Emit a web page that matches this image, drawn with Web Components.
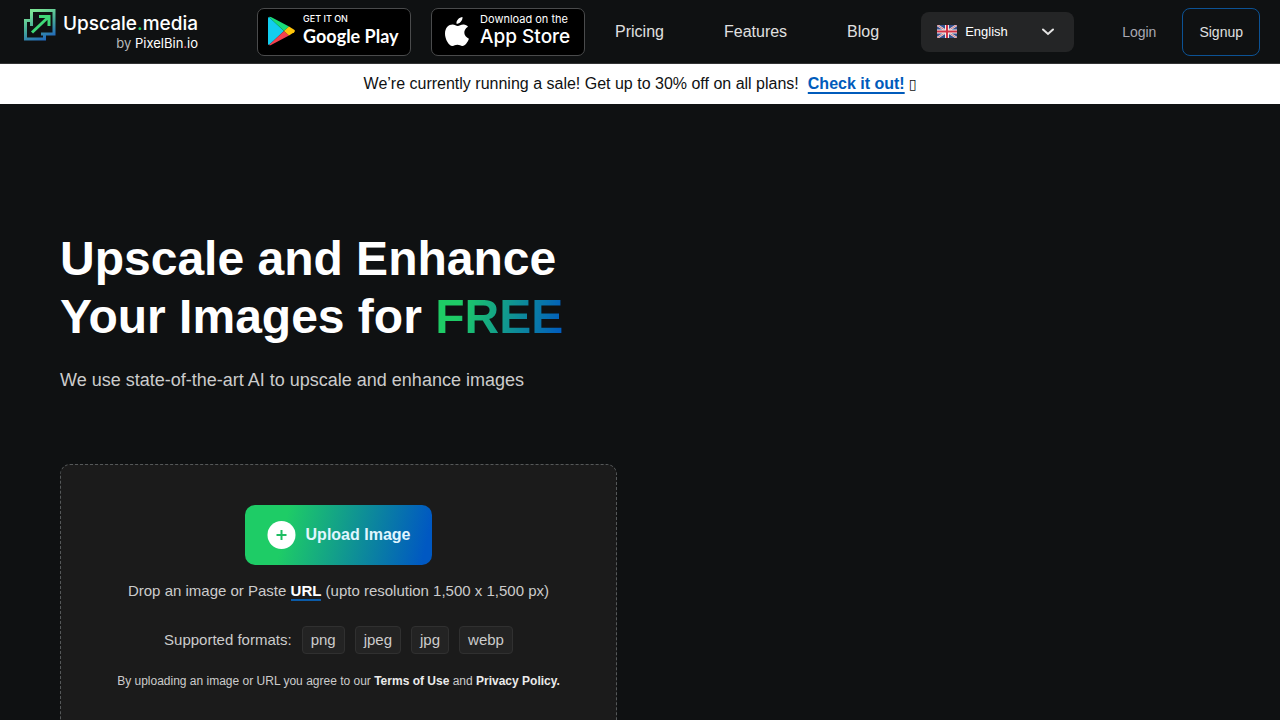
<!DOCTYPE html>
<html lang="en">
<head>
<meta charset="utf-8">
<meta name="viewport" content="width=device-width, initial-scale=1">
<title>Upscale.media</title>
<style>
  body { margin: 0; background: #0f1112; color: #fff; font-family: "Liberation Sans", Arial, sans-serif; }
</style>
</head>
<body>
<upscale-page></upscale-page>
<script>
const define = (name, html) => {
  const template = document.createElement('template');
  template.innerHTML = html;
  customElements.define(name, class extends HTMLElement {
    constructor() {
      super();
      this.attachShadow({ mode: 'open' }).append(template.content.cloneNode(true));
    }
  });
};

define('brand-logo', `
  <style>
    :host { display: block; }
    a { display: flex; gap: 7px; color: #fff; text-decoration: none; font-family: Inter, sans-serif; }
    svg { display: block; margin-top: 1px; }
    .words { display: flex; flex-direction: column; align-items: flex-end; }
    .name { font-size: 19px; line-height: 32px; font-weight: 500; }
    .by { font-size: 13px; line-height: 6px; font-weight: 400; }
    .by span { color: #b9bbbd; }
    .name i { font-style: normal; color: #1ecc66; }
    .by i { font-style: normal; color: #e05a78; }
  </style>
  <a href="#home">
    <svg width="32" height="32" viewBox="0 0 32 32" fill="none" stroke="url(#g)" stroke-width="3">
      <defs><linearGradient id="g" x1="10" y1="2" x2="22" y2="32" gradientUnits="userSpaceOnUse">
        <stop offset="0" stop-color="#7be495"/><stop offset=".45" stop-color="#48ad98"/><stop offset="1" stop-color="#1e62c0"/>
      </linearGradient></defs>
      <path d="M7.500 17V1.500H30V25H17M7.500 11.500H1.500V30H20.500V25"/>
      <path stroke="#3fd878" d="M8 23.500 25 7.500M15 7.500H25V17"/>
    </svg>
    <span class="words"><span class="name">Upscale<i>.</i>media</span><span class="by"><span>by</span> PixelBin<i>.</i>io</span></span>
  </a>`);

define('store-badge', `
  <style>
    :host { display: block; }
    a { box-sizing: border-box; width: 154px; height: 48px; display: flex; align-items: center; gap: 8px; padding: 0 10px 2px;
        border: 1px solid #4a4b4c; border-radius: 7px; background: #000; color: #fff; text-decoration: none; white-space: nowrap; }
    .text { display: flex; flex-direction: column; }
  </style>
  <a href="#store"><slot name="icon"></slot><span class="text"><slot></slot></span></a>`);

define('language-picker', `
  <style>
    :host { display: block; }
    label { display: grid; grid-template-columns: 16px 20px 1fr 12px 20px; align-items: center; width: 153px; height: 40px; border-radius: 8px; background: #242526; }
    svg { display: block; grid-row: 1; }
    .flag { grid-column: 2; }
    .arrow { grid-column: 4; }
    select { grid-row: 1; grid-column: 1 / -1; appearance: none; width: 100%; height: 40px; padding: 0 36px 0 44px; margin: 0;
      border: 0; background: transparent; color: #fff; font: 13px/16px "Liberation Sans", Arial, sans-serif; }
  </style>
  <label>
    <svg class="flag" width="20" height="13" viewBox="0 0 20 13">
      <path fill="#35508f" d="M0 0h20v13H0z"/>
      <path stroke="#e6dfe2" stroke-width="2.200" d="M0 0 20 13M20 0 0 13"/>
      <path stroke="#d0606a" stroke-width=".8" d="M0 0 20 13M20 0 0 13"/>
      <path stroke="#eee" stroke-width="4" d="M10 0v13M0 6.500h20"/>
      <path stroke="#d23346" stroke-width="2" d="M10 0v13M0 6.500h20"/>
    </svg>
    <svg class="arrow" width="12" height="8" viewBox="0 0 12 8" fill="none" stroke="#e4e4e4" stroke-width="2" stroke-linecap="round"><path d="M1 1.500 6 6l5-4.500"/></svg>
    <select aria-label="Language"><option>English</option></select>
  </label>`);

define('site-header', `
  <style>
    :host { display: block; border-bottom: 1px solid #323334; }
    header { display: flex; align-items: center; height: 63px; padding: 0 20px 0 24px; }
    brand-logo { align-self: flex-start; margin: 8px auto 0 0; }
    .stores { display: flex; gap: 20px; }
    nav { display: flex; gap: 60px; margin: 0 42px 0 30px; }
    a { color: #e0e0e0; text-decoration: none; font-size: 16px; line-height: 20px; }
    .account { display: flex; align-items: center; gap: 26px; margin-left: 48px; }
    .account a { font-size: 14px; color: #a9a9b4; }
    .account button { height: 48px; padding: 0 16px; border: 1px solid #0c5294; border-radius: 8px; background: transparent; color: #e0e0e0; font: 14px/20px "Liberation Sans", Arial, sans-serif; }
    .get { font: 500 9px/10px Inter, sans-serif; }
    .play { font: 700 18px/24px Lato, sans-serif; }
    .down { font: 400 11px/12px Inter, sans-serif; }
    .app { font: 500 19px/24px Inter, sans-serif; }
  </style>
  <header>
    <brand-logo></brand-logo>
    <div class="stores">
      <store-badge>
        <svg slot="icon" width="27" height="30" viewBox="0 0 27 30">
          <path fill="#12cdef" d="M1 1Q0 1 0 2.500v25Q0 29 1 29l15-14z"/>
          <path fill="#19dc78" d="M1 1q1-.6 2.500.3L21 10.500 16 15z"/>
          <path fill="#f4404f" d="M1 29q1 .6 2.500-.3L21 19.500 16 15z"/>
          <path fill="#ffc50a" d="m21 10.500 5.200 3.300q1.400 1.200 0 2.400L21 19.500 16 15z"/>
        </svg>
        <span class="get">GET IT ON</span><span class="play">Google Play</span>
      </store-badge>
      <store-badge>
        <svg slot="icon" width="30" height="32" viewBox="0 0 30 32" fill="#fff">
          <path d="M20.500 2c.2 3.800-2.800 6.800-6 6.800C14.100 5.300 17.200 2.200 20.500 2zM26 11.800c-5.500 3.200-4.500 9.600.9 11.900-1 3-3.600 7.200-6.500 7.300-2 0-2.700-1.200-5-1.200s-3.100 1.200-5 1.200C6.700 31 3 23.900 3 18.700c0-6 3.800-9.100 7.500-9.100 2.200 0 3.700 1.400 5.300 1.400 1.500 0 3.100-1.600 5.900-1.500 1.800.1 3.300.9 4.300 2.300z"/>
        </svg>
        <span class="down">Download on the</span><span class="app">App Store</span>
      </store-badge>
    </div>
    <nav><a href="#pricing">Pricing</a><a href="#features">Features</a><a href="#blog">Blog</a></nav>
    <language-picker></language-picker>
    <div class="account"><a href="#login">Login</a><button type="button">Signup</button></div>
  </header>`);

define('sale-banner', `
  <style>
    :host { display: flex; justify-content: center; align-items: center; height: 40px; background: #fff; color: #0f1112; font-size: 16px; line-height: 20px; }
    a { margin: 0 4px 0 9px; color: #005bbb; font-weight: 700; text-decoration: underline 2px; text-underline-offset: 3px; text-decoration-skip-ink: none; }
    .glyph { font: 14px/20px "DejaVu Sans", sans-serif; }
  </style>
  <span>We’re currently running a sale! Get up to 30% off on all plans!</span><a href="#offer">Check it out!</a><span class="glyph">▯</span>`);

define('format-chip', `
  <style>
    :host { display: block; padding: 4px 8px; border: 1px solid #303030; border-radius: 4px; background: #232323; line-height: 18px; }
  </style>
  <slot></slot>`);

define('upload-card', `
  <style>
    :host { display: flex; flex-direction: column; align-items: center; box-sizing: border-box; padding: 40px 20px 60px;
      border: 1px dashed #555859; border-radius: 10px; background: #1b1b1b; color: #ccc; font-size: 15px; line-height: 20px; }
    button { display: flex; align-items: center; gap: 10px; height: 60px; padding: 0 22px; border: 0; border-radius: 10px;
      background: linear-gradient(102deg, #1ecc66 22%, #0058c2 95%); color: #e0f6ff; font: 700 16px/20px "Liberation Sans", Arial, sans-serif; }
    p { margin: 0; }
    .drop { margin-top: 16px; }
    .drop a { color: #fff; font-weight: 700; text-decoration: none; border-bottom: 2px solid #0b5ba8; }
    .formats { display: flex; align-items: center; gap: 10px; margin-top: 25px; }
    .terms { margin-top: 17px; font-size: 12px; }
    .terms a { color: #ebebeb; font-weight: 700; text-decoration: none; }
  </style>
  <button type="button">
    <svg width="29" height="28" viewBox="0 0 29 28"><circle cx="14.500" cy="14" r="14" fill="#fff"/><path d="M14.500 9v10M9.500 14h10" stroke="#1ebd62" stroke-width="2"/></svg>
    Upload Image
  </button>
  <p class="drop">Drop an image or Paste <a href="#url">URL</a> (upto resolution 1,500 x 1,500 px)</p>
  <div class="formats"><span>Supported formats:</span><format-chip>png</format-chip><format-chip>jpeg</format-chip><format-chip>jpg</format-chip><format-chip>webp</format-chip></div>
  <p class="terms">By uploading an image or URL you agree to our <a href="#terms">Terms of Use</a> and <a href="#privacy">Privacy Policy.</a></p>`);

define('upscale-hero', `
  <style>
    :host { display: grid; grid-template-columns: 1fr 1fr; gap: 46px; padding: 126px 60px 60px; }
    h1 { margin: 0; font-size: 48px; line-height: 58px; }
    .free { background: linear-gradient(102deg, #1ecc66 20%, #0058c2 100%); background-clip: text; -webkit-background-clip: text; color: transparent; }
    p { margin: 22px 0 72px; color: #ccc; font-size: 18px; line-height: 24px; }
  </style>
  <section>
    <h1>Upscale and Enhance<br>Your Images for <span class="free">FREE</span></h1>
    <p>We use state-of-the-art AI to upscale and enhance images</p>
    <upload-card></upload-card>
  </section>`);

define('upscale-page', `
  <style>:host { display: block; }</style>
  <site-header></site-header>
  <sale-banner></sale-banner>
  <main><upscale-hero></upscale-hero></main>`);
</script>
</body>
</html>
